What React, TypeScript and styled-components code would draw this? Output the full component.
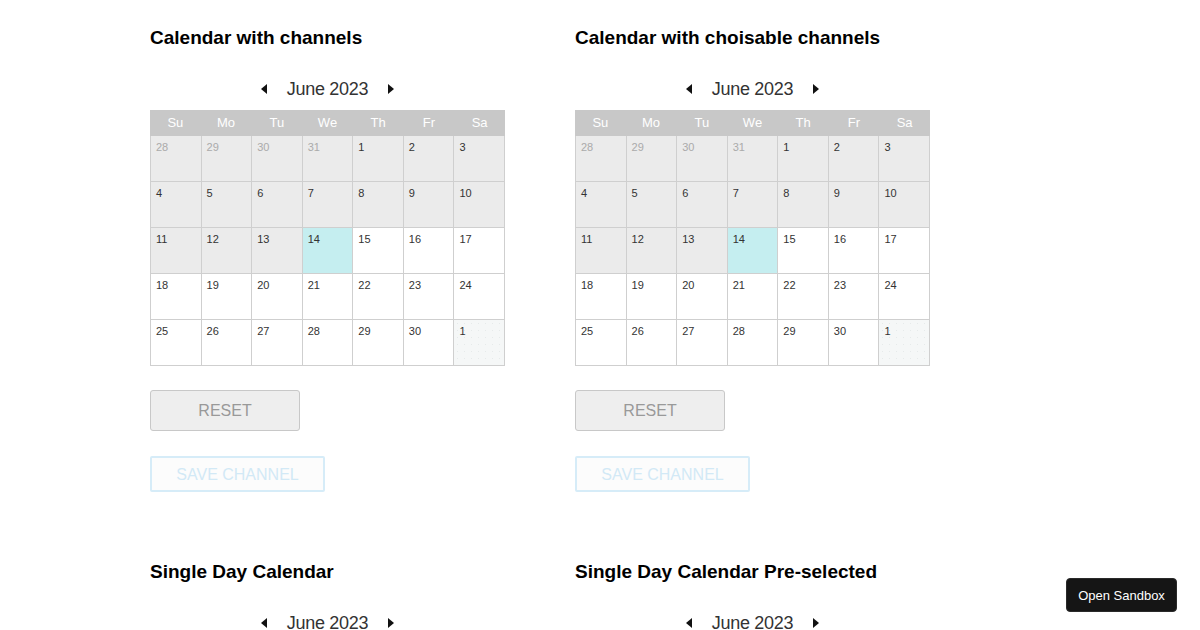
import styled, { createGlobalStyle } from 'styled-components';

const GlobalStyle = createGlobalStyle`
  html, body {
    margin: 0;
    padding: 0;
    background: #fff;
    overflow: hidden;
  }
  body {
    font-family: "Liberation Sans", Arial, sans-serif;
  }
`;

type DayState = 'past' | 'prev' | 'today' | 'future' | 'next';

const WEEKDAYS = ['Su', 'Mo', 'Tu', 'We', 'Th', 'Fr', 'Sa'];

const buildDays = (): { label: number; state: DayState }[] => {
  const days: { label: number; state: DayState }[] = [28, 29, 30, 31].map((d) => ({ label: d, state: 'prev' }));
  for (let d = 1; d <= 30; d++) {
    days.push({ label: d, state: d < 14 ? 'past' : d === 14 ? 'today' : 'future' });
  }
  days.push({ label: 1, state: 'next' });
  return days;
};

const Calendar = ({ title, withButtons }: { title: string; withButtons?: boolean }) => {
  const days = buildDays();

  return (
    <Section>
      <Title>{title}</Title>
      <MonthNav>
        <Arrow $dir="left" />
        <MonthLabel>June 2023</MonthLabel>
        <Arrow $dir="right" />
      </MonthNav>
      <WeekHeader>
        {WEEKDAYS.map((w) => (
          <WeekDay key={w}>{w}</WeekDay>
        ))}
      </WeekHeader>
      <DayGrid>
        {days.map((day, i) => (
          <DayCell key={i} $state={day.state}>
            {day.label}
          </DayCell>
        ))}
      </DayGrid>
      {withButtons && (
        <>
          <ResetBtn>RESET</ResetBtn>
          <SaveBtn>SAVE CHANNEL</SaveBtn>
        </>
      )}
    </Section>
  );
};

const App = () => {
  return (
    <>
      <GlobalStyle />
      <Page>
        <Calendar title="Calendar with channels" withButtons />
        <Calendar title="Calendar with choisable channels" withButtons />
        <Calendar title="Single Day Calendar" />
        <Calendar title="Single Day Calendar Pre-selected" />
      </Page>
      <SandboxBtn>Open Sandbox</SandboxBtn>
    </>
  );
};

export default App;

const Page = styled.div`
  display: grid;
  grid-template-columns: 355px 355px;
  column-gap: 70px;
  row-gap: 69px;
  padding: 27px 0 0 150px;
  height: 630px;
  box-sizing: border-box;
  overflow: hidden;
`;

const Section = styled.section`
  display: flex;
  flex-direction: column;
  align-items: flex-start;
`;

const Title = styled.h2`
  margin: 0;
  font-size: 19px;
  line-height: 22px;
  font-weight: bold;
  color: #000;
  white-space: nowrap;
`;

const MonthNav = styled.div`
  display: flex;
  align-items: center;
  justify-content: center;
  gap: 20px;
  width: 355px;
  height: 24px;
  margin-top: 28px;
`;

const MonthLabel = styled.span`
  font-size: 18px;
  color: #333;
  letter-spacing: -0.3px;
`;

const Arrow = styled.span<{ $dir: 'left' | 'right' }>`
  width: 0;
  height: 0;
  border-top: 5px solid transparent;
  border-bottom: 5px solid transparent;
  ${({ $dir }) => ($dir === 'left' ? 'border-right: 6px solid #111;' : 'border-left: 6px solid #111;')}
`;

const WeekHeader = styled.div`
  display: grid;
  grid-template-columns: repeat(7, 1fr);
  width: 355px;
  height: 26px;
  margin-top: 9px;
  background: #c8c8c8;
`;

const WeekDay = styled.div`
  display: flex;
  align-items: center;
  justify-content: center;
  padding-bottom: 1px;
  color: #fff;
  font-size: 13px;
`;

const cellBg: Record<DayState, string> = {
  prev: '#ebebeb',
  past: '#ebebeb',
  today: '#c5eef0',
  future: '#fff',
  next: '#f5f7f7',
};

const DayGrid = styled.div`
  display: grid;
  grid-template-columns: repeat(7, 1fr);
  grid-auto-rows: 45px;
  gap: 1px;
  width: 355px;
  box-sizing: border-box;
  border: 1px solid #cfcfcf;
  border-top: none;
  background: #cfcfcf;
`;

const DayCell = styled.div<{ $state: DayState }>`
  padding: 5px 0 0 5px;
  font-size: 11px;
  line-height: 13px;
  color: ${({ $state }) => ($state === 'prev' ? '#aaa' : '#333')};
  background-color: ${({ $state }) => cellBg[$state]};
  ${({ $state }) =>
    $state === 'next' &&
    `background-image: radial-gradient(#e6eaea 0.6px, transparent 0.8px);
     background-size: 7px 7px;`}
`;

const ResetBtn = styled.button`
  width: 150px;
  height: 41px;
  margin-top: 24px;
  padding: 0;
  font-family: inherit;
  font-size: 16px;
  color: #999;
  background: #eee;
  border: 1px solid #c8c8c8;
  border-radius: 3px;
`;

const SaveBtn = styled.button`
  width: 175px;
  height: 36px;
  margin-top: 25px;
  padding: 1px 0 0;
  font-family: inherit;
  font-size: 16px;
  color: #d2e9f6;
  background: #fcfcfc;
  border: 2px solid #d6ecf8;
  border-radius: 2px;
`;

const SandboxBtn = styled.button`
  position: fixed;
  right: 23px;
  bottom: 18px;
  width: 111px;
  height: 34px;
  padding: 0;
  font-family: "Liberation Sans", Arial, sans-serif;
  font-size: 13px;
  color: #fff;
  background: #151515;
  border: 1px solid #2a2a2a;
  border-radius: 4px;
`;
